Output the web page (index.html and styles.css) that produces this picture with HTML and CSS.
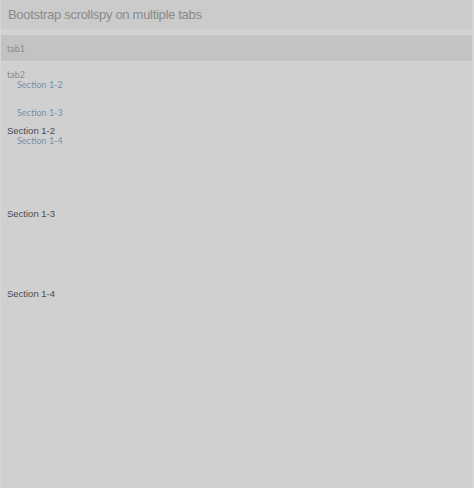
FILE: index.html
```html
<!DOCTYPE html>
<html>
<head>
<meta charset="utf-8">
<link rel="stylesheet" href="styles.css">
</head>
<body>
<header class="top"><h1 class="title">Bootstrap scrollspy on multiple tabs</h1></header>
<nav class="tabs">
  <div class="tab active">tab1</div>
</nav>
<main class="content">
  <div class="tab2">tab2</div>
  <ul class="subnav">
    <li class="l12">Section 1-2</li>
    <li class="l13">Section 1-3</li>
  </ul>
  <h4 class="sec s12">Section 1-2</h4>
  <ul class="subnav">
    <li class="l14">Section 1-4</li>
  </ul>
  <h4 class="sec s13">Section 1-3</h4>
  <h4 class="sec s14">Section 1-4</h4>
</main>
</body>
</html>
```
FILE: styles.css
```css
html, body {
  margin: 0;
  padding: 0;
  height: 100%;
}
body {
  background: #d0d0d0;
  font-family: "Liberation Sans", Arial, sans-serif;
  border-left: 1px solid #d6d6d6;
  border-right: 2px solid #d6d6d6;
  box-sizing: border-box;
}
.top {
  height: 29px;
  background: #cbcbcb;
  border-bottom: 6px solid #d3d3d3;
  display: flex;
  align-items: center;
  padding-left: 7px;
}
.title {
  margin: 0;
  font-size: 13px;
  letter-spacing: -0.3px;
  font-weight: normal;
  color: #8a8a8a;
}
.tabs {
  border-bottom: 1px solid #d6d6d6;
}
.tab {
  height: 26px;
  background: #c3c3c3;
  display: flex;
  align-items: center;
  padding-left: 6px;
  font-family: Lato, sans-serif;
  font-size: 9px;
  color: #8b8b8b;
}
.content {
  padding: 8px 0 0 6px;
}
.tab2 {
  font-family: Lato, sans-serif;
  font-size: 9px;
  color: #8b8b8b;
  line-height: 10px;
}
.subnav {
  list-style: none;
  margin: 0;
  padding: 0 0 0 10px;
  font-family: Lato, sans-serif;
  font-size: 9px;
  line-height: 10px;
  color: #7990ab;
}
.l13 {
  margin-top: 18px;
}
.sec {
  margin: 0;
  font-size: 9.5px;
  font-weight: normal;
  line-height: 10px;
  color: #4a4a4a;
}
.s12 { margin-top: 7.5px; }
.s13 { margin-top: 63px; }
.s14 { margin-top: 70px; }
```
